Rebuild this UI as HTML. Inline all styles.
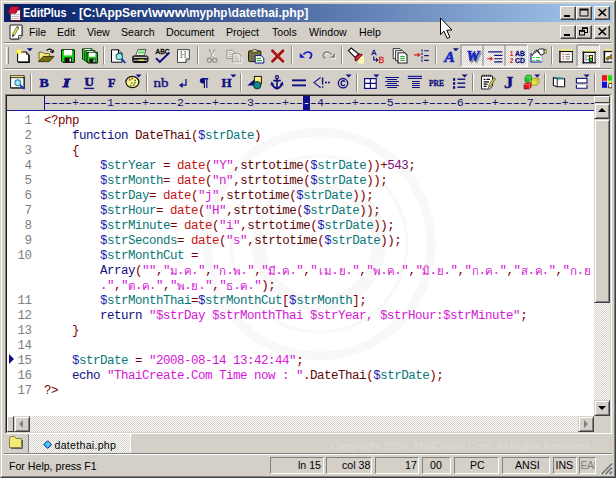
<!DOCTYPE html>
<html><head><meta charset="utf-8"><title>EditPlus - datethai.php</title>
<style>
*{box-sizing:border-box;margin:0;padding:0}
html,body{width:616px;height:478px;overflow:hidden;background:#d4d0c8}
body{position:relative;font-family:"Liberation Sans",sans-serif;font-size:12px;color:#000}
.abs,.a{position:absolute}
i{font-style:normal}
#title{left:4px;top:4px;width:608px;height:18px;background:linear-gradient(90deg,#0a246a 0%,#0a246a 6%,#a6caf0 100%)}
#title .tt{left:0;top:2px;color:#fff;font-weight:bold;font-size:12.2px;line-height:14px;white-space:nowrap}
.btn{position:absolute;width:16px;height:14px;background:#d4d0c8;border:1px solid;border-color:#fff #404040 #404040 #fff;box-shadow:inset -1px -1px 0 #808080}
#menu span{position:absolute;top:26px;font-size:10.6px;line-height:13px;white-space:nowrap}
.hline{position:absolute;left:4px;width:608px;height:2px;border-top:1px solid #808080;border-bottom:1px solid #fff}
.vsep{position:absolute;width:2px;height:20px;border-left:1px solid #808080;border-right:1px solid #fff}
.grip{position:absolute;width:3px;height:22px;border:1px solid;border-color:#fff #808080 #808080 #fff}
/* editor frame */
#frame{left:5px;top:94px;width:607px;height:340px;border:1px solid;border-color:#808080 #fff #fff #808080}
#frame2{left:6px;top:95px;width:604px;height:338px;border:1px solid;border-color:#202020 #d4d0c8 #d4d0c8 #202020}
#ruler{left:7px;top:96px;width:587px;height:15px;background:#d4d0c8;border-bottom:1px solid #1c1c9c;overflow:hidden}
#ruler .rt{position:absolute;left:37px;top:0;font-family:"Liberation Mono",monospace;font-size:11.667px;color:#10106c;white-space:pre;line-height:14px}
#ruler .vl{position:absolute;left:37px;top:0;width:1.2px;height:15px;background:#10108c}
#ruler .h{text-shadow:0.9px 0 0 #10106c,-0.9px 0 0 #10106c}
#editor{left:7px;top:111px;width:587px;height:305px;background:#fff;overflow:hidden}
.ln{position:absolute;left:0;width:24.5px;text-align:right;color:#808080;font-family:"Liberation Mono",monospace;font-size:12.5px;letter-spacing:-0.5px;line-height:15px;height:15px;margin-top:2px}
.cl{position:absolute;left:37px;white-space:pre;font-family:"Liberation Mono","DejaVu Sans Mono",monospace;font-size:12.5px;letter-spacing:-0.5px;line-height:15px;height:15px;color:#5c0808;margin-top:2px}
.k{color:#101080}.v{color:#087878}.d{color:#1818b0}.f{color:#c41414}.s{color:#d418d4}.p{color:#800000}.n{color:#801080}.t{color:#800000}
.th{display:inline-block;overflow:hidden;width:7px;height:15px;vertical-align:top;text-align:center;font-size:11.5px;line-height:15px}
/* scrollbars */
.track{background-color:#fff;background-image:conic-gradient(#d4d0c8 25%,#fff 0 50%,#d4d0c8 0 75%,#fff 0);background-size:2px 2px}
.sbtn{position:absolute;background:#d4d0c8;border:1px solid;border-color:#d4d0c8 #404040 #404040 #d4d0c8;box-shadow:inset 1px 1px 0 #fff,inset -1px -1px 0 #808080}
.arrow{position:absolute;width:0;height:0;border:4px solid transparent}
/* status */
.sf{position:absolute;top:457px;height:17px;border:1px solid;border-color:#808080 #fff #fff #808080;font-size:10.6px;line-height:15px;white-space:nowrap}
.sf i{position:absolute;top:0}

#title .tt i{position:absolute;top:0;transform-origin:0 0;white-space:pre}

</style></head><body>
<!-- outer window border -->
<div class="a" style="left:0;top:0;width:616px;height:478px;border:1px solid;border-color:#d4d0c8 #404040 #404040 #d4d0c8"></div>
<div class="a" style="left:1px;top:1px;width:614px;height:476px;border:1px solid;border-color:#fff #808080 #808080 #fff"></div>
<!-- title bar -->
<div id="title" class="a"><div class="tt a"><i style="left:19px;transform:scaleX(0.892)">EditPlus </i><i style="left:67.5px;transform:scaleX(0.862)">- </i><i style="left:75.0px;transform:scaleX(0.980)">[C:\AppServ</i><i style="left:144.0px;transform:scaleX(1.194)">\www</i><i style="left:182.0px;transform:scaleX(0.957)">\myphp</i><i style="left:223.5px;transform:scaleX(1.007)">\datethai.php]</i></div></div>
<div class="btn" style="left:560px;top:6px"></div>
<div class="btn" style="left:576px;top:6px"></div>
<div class="btn" style="left:594px;top:6px"></div>
<!-- menu -->
<div id="menu">
<span style="left:29px">File</span><span style="left:57px">Edit</span><span style="left:87px">View</span><span style="left:121px">Search</span><span style="left:166px">Document</span><span style="left:226px">Project</span><span style="left:272px">Tools</span><span style="left:309px">Window</span><span style="left:359px">Help</span>
</div>
<div class="btn" style="left:560px;top:25px"></div>
<div class="btn" style="left:576px;top:25px"></div>
<div class="btn" style="left:594px;top:25px"></div>
<div class="hline" style="top:42px"></div>
<div class="hline" style="top:68px"></div>
<svg class="a" style="left:0;top:0;z-index:5" width="616" height="44" viewBox="0 0 616 44">
<!-- app icon -->
<g><path d="M10.6 10.6 H20.2 V20.2 H10.6 Z" fill="#fff"/><path d="M20.6 8 V20.6 H10.4" fill="none" stroke="#700818" stroke-width="1.2"/><path d="M11.6 14.4 H19.6 M11.6 16.4 H19.6 M11.6 18.4 H19.6" stroke="#a8a8a8" stroke-width="0.8"/>
<path d="M10.6 13.4 V20 " stroke="#404040" stroke-width="0.8"/><path d="M16 13.4 L19.6 9.6 V13.4 Z" fill="#fff"/>
<path d="M10.6 6.6 H19.4 L16 13.2 H7.6 Z" fill="#d0103c" stroke="#68081c" stroke-width="0.7"/><path d="M11.4 5.8 H19.6" stroke="#181818" stroke-width="1" stroke-dasharray="0.9 0.9"/></g>
<!-- doc icon -->
<g><path d="M10 25 H22 V35.4 L18.6 39 H10 Z" fill="#fff" stroke="#202020" stroke-width="1"/><path d="M22.6 26 V35.6 L18.8 39.6 H11" fill="none" stroke="#505050" stroke-width="0.9"/><path d="M22 35.4 H18.6 V39" fill="#e8e8e8" stroke="#202020" stroke-width="0.8"/>
<path d="M16.6 27.2 L18.6 28.2 L14.4 35.4 L12.4 34.4 Z" fill="#f0e858" stroke="#505020" stroke-width="0.7"/><path d="M12.4 34.4 L14.4 35.4 L12.2 37.6 Z" fill="#101010"/><path d="M16.9 26.6 L18.9 27.6" stroke="#606060" stroke-width="1.3"/></g>
<!-- title buttons glyphs -->
<g fill="#000"><rect x="564" y="15" width="6" height="2"/><path d="M579.5 8.5 H588.5 V16.5 H579.5 Z M580.5 10.5 V15.5 H587.5 V10.5 Z" fill-rule="evenodd"/>
<path d="M598.6 9 L606 16 M606 9 L598.6 16" stroke="#000" stroke-width="1.6"/>
<rect x="564" y="34" width="6" height="2"/>
<g fill="none" stroke="#000" stroke-width="1"><rect x="582.5" y="28.5" width="5" height="4"/><path d="M582 28 H588" stroke-width="1.6"/><rect x="579.5" y="31" width="5" height="4" fill="#d4d0c8"/><path d="M579 30.8 H585" stroke-width="1.6"/></g>
<path d="M598.6 28 L606 35 M606 28 L598.6 35" stroke="#000" stroke-width="1.6"/></g>
<!-- mouse cursor -->
<path d="M440.5 18 V34.6 L444 31.2 L447.2 38.4 L449.8 37.2 L446.8 30.2 L452 30 Z" fill="#fff" stroke="#000" stroke-width="1" stroke-linejoin="miter"/>
</svg>
<svg class="a" style="left:0;top:0" width="612" height="96" viewBox="0 0 612 96" font-family="'Liberation Serif',serif">
<defs>
<pattern id="chk" width="2" height="2" patternUnits="userSpaceOnUse"><rect width="2" height="2" fill="#fff"/><rect width="1" height="1" fill="#d4d0c8"/><rect x="1" y="1" width="1" height="1" fill="#d4d0c8"/></pattern>
<g id="dd"><path d="M-0.2 0 h6 l-3 3 z" fill="#0c0c88"/></g>
<g id="sep"><rect x="0" y="0.5" width="1" height="18" fill="#8c8884"/><rect x="1" y="0.5" width="1" height="18" fill="#fff"/></g>
<g id="pressed"><rect x="0" y="0" width="22" height="21" fill="url(#chk)"/><path d="M0 21 V0 H22" fill="none" stroke="#808080"/><path d="M0.5 21.5 H22.5 V0" fill="none" stroke="#fff"/></g>
</defs>
<!-- grips -->
<g><rect x="6" y="47" width="1" height="17" fill="#fff"/><rect x="7" y="47" width="1" height="17" fill="#d4d0c8"/><rect x="8" y="47" width="1" height="17" fill="#808080"/></g>
<!-- ===== toolbar 1 ===== -->
<!-- new -->
<g><path d="M17.6 52 H26.4 L28.8 54.4 V62 H17.6 Z" fill="#fff" stroke="#000" stroke-width="1"/><path d="M29.2 55 V62.4 H18.4" fill="none" stroke="#000" stroke-width="1.1"/><path d="M26.4 52 V54.4 H28.8" fill="none" stroke="#000" stroke-width="0.8"/>
<path d="M19 47.8 L20 50.6 L22.8 51.6 L20 52.6 L19 55.4 L18 52.6 L15.2 51.6 L18 50.6 Z" fill="#ffee00"/><path d="M16.6 49.2 L21.4 54 M21.4 49.2 L16.6 54" stroke="#fff060" stroke-width="1"/><circle cx="19" cy="51.6" r="1.9" fill="#ffff40"/><circle cx="19" cy="51.6" r="0.9" fill="#ffffd0"/>
<use href="#dd" x="27" y="48.3"/></g>
<!-- open -->
<g><path d="M39 60.6 V52.2 H42.6 L44 53.6 H49.4 V56.4" fill="#f8ec80" stroke="#585828" stroke-width="0.9"/><path d="M38.6 61.6 L43.2 56.4 H54 L49.2 61.6 Z" fill="#787010" stroke="#282808" stroke-width="0.9"/>
<path d="M46.6 50.6 Q49.2 47.8 52 50.2 L52.6 52 M52.8 52.8 L50.2 51.6 M52.8 52.8 L53.6 50" fill="none" stroke="#000" stroke-width="1.1"/></g>
<!-- save -->
<g><path d="M61.5 49.8 H74.3 V62.3 H62.8 L61.5 61 Z" fill="#18d818" stroke="#000"/><rect x="64" y="50" width="8" height="5.4" fill="#fff"/><rect x="64.5" y="57.5" width="7.5" height="4.8" fill="#101010"/><rect x="69.5" y="58.5" width="1.6" height="3" fill="#e8e8e8"/></g>
<!-- save all -->
<g><path d="M82.5 48.8 H92 V60 H83.5 L82.5 59 Z" fill="#28c828" stroke="#104010"/><rect x="84.5" y="49" width="6" height="3.6" fill="#fff"/>
<path d="M84.8 50.6 H95 V61.6 H85.8 L84.8 60.6 Z" fill="#28c828" stroke="#104010"/><rect x="87" y="51" width="6" height="3.6" fill="#fff"/>
<path d="M87 52.4 H97.4 V63 H88 L87 62 Z" fill="#20d020" stroke="#000"/><rect x="89" y="52.6" width="6.4" height="4.2" fill="#fff"/><rect x="89.4" y="58.6" width="6" height="4.2" fill="#101010"/><rect x="93.4" y="59.4" width="1.3" height="2.6" fill="#e8e8e8"/></g>
<use href="#sep" x="103" y="46"/>
<!-- print preview -->
<g><path d="M111.5 49.8 H118.5 L122 53.3 V62.2 H111.5 Z" fill="#fff" stroke="#000"/><path d="M118.5 49.8 V53.3 H122" fill="#d4d0c8" stroke="#000"/>
<circle cx="119.3" cy="56.6" r="3.2" fill="#9fe8e8" stroke="#107070" stroke-width="1.1"/><path d="M121.8 59.2 L125.4 63" stroke="#1030c0" stroke-width="1.8"/></g>
<!-- print -->
<g><path d="M135.6 55.4 L138.2 49.4 H146 L144.4 55.4 Z" fill="#fff" stroke="#303030" stroke-width="0.8"/><path d="M138.6 51 H145 M138 52.8 H144.4" stroke="#30c830" stroke-width="1.2"/>
<path d="M133.4 55.4 H146.6 Q148.4 55.6 148.4 57.6 V60.6 Q148.4 63 146 63 H134.4 Q132.2 63 132.2 60.6 V57.4 Q132.2 55.6 133.4 55.4 Z" fill="#101010"/>
<path d="M133.6 57.3 H147" stroke="#f4f4f4" stroke-width="1"/><path d="M133.4 60.2 H147.2" stroke="#e8e8e8" stroke-width="0.9"/><rect x="138.8" y="59.5" width="5.4" height="1.4" fill="#f0e430"/><path d="M146 55.8 Q148 56 148 58 V60.4 Q148 62.6 146 62.6" fill="none" stroke="#505050" stroke-width="0.8"/></g>
<!-- spell -->
<g><text x="155.6" y="53.8" font-family="'Liberation Sans',sans-serif" font-size="6.4" fill="#000" stroke="#000" stroke-width="0.3" textLength="14" lengthAdjust="spacingAndGlyphs">ABC</text>
<path d="M156 58.2 L159.8 62 L169.2 52.8" fill="none" stroke="#0c0c80" stroke-width="1.9"/></g>
<!-- H doc -->
<g><path d="M177.5 49.6 H189.3 V59 L186 62.4 H177.5 Z" fill="#fff" stroke="#303030" stroke-width="0.9"/><path d="M189.3 59 H186 V62.4" fill="#d4d0c8" stroke="#303030" stroke-width="0.9"/>
<text x="179.4" y="57.8" font-size="10" fill="#808080">H</text></g>
<use href="#sep" x="197" y="46"/>
<!-- cut (disabled) -->
<g fill="none" stroke="#8c8c88" stroke-width="1.1"><path d="M209.2 49.6 L213.8 58.2 M214.8 49.6 L210.2 58.2"/><circle cx="209.4" cy="60.2" r="2.1"/><circle cx="214.8" cy="60.2" r="2.1"/><path d="M210.2 50.6 L213.8 57.2 M213.8 50.6 L210.2 57.2" stroke="#fff" stroke-width="0.7" transform="translate(0.8 0.8)"/></g>
<!-- copy (disabled) -->
<g fill="#eceae4" stroke="#8c8c88" stroke-width="0.9"><path d="M226.8 50.2 H232 L234.4 52.6 V58.6 H226.8 Z"/><path d="M228.4 52.6 H231.4 M228.4 54.6 H232.8 M228.4 56.6 H232.8" stroke="#a4a29c" stroke-width="0.8"/>
<path d="M232.8 53.4 H238.4 L241 56 V62 H232.8 Z"/><path d="M234.6 56.2 H237.4 M234.6 58.2 H239.2 M234.6 60.2 H239.2" stroke="#a4a29c" stroke-width="0.8"/><path d="M233.4 62.9 H241.9 V56.4" stroke="#fff" fill="none"/></g>
<!-- paste -->
<g><rect x="248.5" y="50.8" width="12.4" height="10.8" rx="1" fill="#747040" stroke="#202010"/><path d="M251.6 52.2 Q251.6 49.4 254.7 49.4 Q257.8 49.4 257.8 52.2 Z" fill="#e8e098" stroke="#303018" stroke-width="0.8"/>
<path d="M255.2 55.6 H261 L263.8 58.2 V63 H255.2 Z" fill="#fff" stroke="#101090"/><path d="M256.8 58.4 H261 M256.8 60.6 H262" stroke="#20b838" stroke-width="1.1"/></g>
<!-- delete X -->
<g><path d="M272.4 50.8 L283 61.4 M283 50.8 L272.4 61.4" stroke="#a80c0c" stroke-width="2.7" stroke-linecap="round"/><path d="M273 51 L282 60" stroke="#d02828" stroke-width="0.9"/></g>
<use href="#sep" x="291" y="46"/>
<!-- undo -->
<g><path d="M303.4 54.6 Q305.4 51.8 308.2 52 Q311.6 52.4 311.6 55.4 Q311.4 57.6 309.4 58.6" fill="none" stroke="#1418d0" stroke-width="1.7"/><path d="M299.8 53 V57.8 H305 Z" fill="#1418d0"/></g>
<!-- redo (disabled) -->
<g><path d="M332.4 55.4 Q330.4 52.6 327.6 52.8 Q324.2 53.2 324.2 56.2 Q324.4 58.4 326.4 59.4" fill="none" stroke="#fff" stroke-width="1.5"/><path d="M336 54 V58.8 H330.8 Z" fill="#fff"/>
<path d="M331.6 54.6 Q329.6 51.8 326.8 52 Q323.4 52.4 323.4 55.4 Q323.6 57.6 325.6 58.6" fill="none" stroke="#848280" stroke-width="1.6"/><path d="M335.2 53 V57.8 H330 Z" fill="#848280"/></g>
<use href="#sep" x="341" y="46"/>
<!-- flashlight -->
<g><path d="M358 56.6 H364 V63.8 H358.6 Z" fill="#fffcb0"/><path d="M359.6 58.4 H363.6 M359.6 60.4 H363.6 M359.6 62.4 H363.6" stroke="#f0e890" stroke-width="0.8" stroke-dasharray="1 1"/>
<path d="M348.4 50.6 L351.2 48 L358.6 54 L355.4 57.6 Z" fill="#fff" stroke="#101010" stroke-width="1.2"/>
<path d="M355.2 57.4 L358.6 53.8 L362.2 54.6 L361 56 L356.4 61 L355 60.4 Z" fill="#c81020" stroke="#50080c" stroke-width="0.9"/><path d="M356.6 58.6 L360.6 55.2" stroke="#ff5060" stroke-width="1"/></g>
<!-- replace A->B -->
<g font-family="'Liberation Sans',sans-serif"><text x="371.2" y="55.4" font-size="7.8" fill="#101080" stroke="#101080" stroke-width="0.3">A</text><text x="378.6" y="62.6" font-size="8.6" fill="#e02020" stroke="#e02020" stroke-width="0.3">B</text>
<path d="M373.8 56.6 V60 H377" fill="none" stroke="#101080" stroke-width="1.2"/><path d="M376 57.8 L378.6 60 L376 62.2 Z" fill="#101080"/></g>
<!-- find in files -->
<g fill="#fff" stroke="#202020" stroke-width="0.9"><path d="M393.2 48.6 H400 L402 50.6 V58.6 H393.2 Z"/><path d="M395.6 50.6 H402.4 L404.4 52.6 V60.8 H395.6 Z"/><path d="M398 52.8 H404.8 L407 55 V63 H398 Z" stroke-width="1.1"/>
<path d="M400.2 56.4 H404.8 M400.2 58.4 H404.8 M400.2 60.4 H404.8" stroke="#189830" stroke-width="1"/></g>
<!-- goto line -->
<g><path d="M414 54.9 H418.6" stroke="#e02020" stroke-width="1.3"/><path d="M417.6 52.5 L420.6 54.9 L417.6 57.3 Z" fill="#e02020"/>
<path d="M422 49.4 V63" stroke="#101080" stroke-width="1.1" stroke-dasharray="2.2 1.2"/><path d="M424.2 50.8 H428.8 M424.2 55.6 H428.8 M424.2 60.4 H428.8" stroke="#101080" stroke-width="1.1"/></g>
<use href="#sep" x="435" y="46"/>
<!-- A font -->
<g><text x="444.2" y="61.6" font-size="14.2" font-weight="bold" font-style="italic" fill="#1424c4" stroke="#1424c4" stroke-width="0.5" textLength="10.6" lengthAdjust="spacingAndGlyphs">A</text><use href="#dd" x="453" y="48.3"/></g>
<!-- W pressed -->
<use href="#pressed" x="461" y="45"/>
<g font-weight="bold" font-style="italic" font-size="14"><text x="468" y="62.6" fill="#908c88" stroke="#908c88" stroke-width="0.5" textLength="13" lengthAdjust="spacingAndGlyphs">W</text><text x="466.6" y="61.4" fill="#1424c4" stroke="#1424c4" stroke-width="0.6" textLength="13" lengthAdjust="spacingAndGlyphs">W</text></g>
<!-- indent pressed -->
<use href="#pressed" x="483" y="45"/>
<g><path d="M488.2 51.9 H502.4 M494.2 55.3 H502.4 M494.2 58.7 H502.4 M494.2 61.9 H502.4" stroke="#101080" stroke-width="1.15"/><path d="M487.4 58.7 H491" stroke="#e02020" stroke-width="1.2"/><path d="M490.4 56.5 L493.2 58.7 L490.4 60.9 Z" fill="#e02020"/></g>
<!-- line numbers pressed -->
<use href="#pressed" x="505" y="45"/>
<g font-family="'Liberation Sans',sans-serif" font-weight="bold" font-size="6.6" stroke-width="0.3"><text x="509.8" y="55.6" fill="#d02020">1</text><text x="509.8" y="63" fill="#d02020">2</text><text x="515" y="55.6" fill="#101080" stroke="#101080" textLength="9.8" lengthAdjust="spacingAndGlyphs">AB</text><text x="515" y="63" fill="#101080" stroke="#101080" textLength="9.8" lengthAdjust="spacingAndGlyphs">CD</text></g>
<!-- properties -->
<g><rect x="531" y="53" width="11" height="9" fill="#fff"/><path d="M531 53 V62 H542.2" fill="none" stroke="#1020a0" stroke-width="1.1"/><path d="M542 55 V62" stroke="#8090d0" stroke-width="0.7"/>
<path d="M532.6 57.5 H534.6 M535.8 57.5 H540.2 M532.6 60.4 H534.6 M535.8 60.4 H540.2" stroke="#28c840" stroke-width="1.2"/>
<path d="M531.8 55.4 L536.8 50 L541.2 54.8" fill="none" stroke="#181818" stroke-width="1.7" stroke-dasharray="1.3 0.7"/>
<path d="M537.8 50.2 L539.4 49 H543.8 L544.2 53.6 L540.8 55.2 Z" fill="#fff" stroke="#101010" stroke-width="0.9"/><rect x="544.3" y="49.2" width="1.8" height="4.4" fill="#f4ec70" stroke="#202010" stroke-width="0.5"/></g>
<use href="#sep" x="551" y="46"/>
<!-- list window -->
<g><rect x="559.2" y="49.4" width="13.6" height="13" fill="#fff"/><rect x="559.2" y="49.4" width="13.6" height="1.4" fill="#f4ec60"/><path d="M559.2 51.5 H572.8" stroke="#101010" stroke-width="1.2"/><path d="M559.9 50.8 V62.4" stroke="#101010" stroke-width="1.4"/><path d="M559.2 61.9 H572.8" stroke="#101010" stroke-width="1.3"/><path d="M572.4 50.8 V62.4" stroke="#101010" stroke-width="0.9"/>
<path d="M562.6 54.4 H563.9 M562.6 56.7 H563.9 M562.6 59 H563.9" stroke="#d02020" stroke-width="1.1"/><path d="M565.4 54.4 H570 M565.4 56.7 H570 M565.4 59 H570" stroke="#808080" stroke-width="1"/></g>
<!-- doc selector pressed -->
<use href="#pressed" x="577" y="45"/>
<g><rect x="582.6" y="50.2" width="13" height="13.2" fill="#fff"/><rect x="582.6" y="50.2" width="13" height="1.4" fill="#f4ec60"/><path d="M582.6 52.3 H595.6" stroke="#101010" stroke-width="1.3"/><path d="M583.4 51.6 V63.4" stroke="#101010" stroke-width="1.6"/><path d="M582.6 62.8 H595.6" stroke="#101010" stroke-width="1.3"/><path d="M595.1 51.6 V63.4" stroke="#101010" stroke-width="1"/>
<path d="M586 54.2 V61 M586 59.5 H589 M586 56 H589" fill="none" stroke="#909090" stroke-width="1.1"/><rect x="588.9" y="55" width="4.1" height="6.9" fill="#181818"/><circle cx="591" cy="57" r="1.25" fill="#f0f040"/><circle cx="591" cy="60" r="1.25" fill="#30e050"/></g>
<!-- pin window (clipped) -->
<g><rect x="603.6" y="49.4" width="13" height="13.2" fill="#fff"/><rect x="603.6" y="49.4" width="13" height="1.4" fill="#f4ec60"/><path d="M603.6 51.5 H616" stroke="#101010" stroke-width="1.3"/><path d="M604.4 50.8 V62.6" stroke="#101010" stroke-width="1.6"/><path d="M603.6 62.1 H616" stroke="#101010" stroke-width="1.3"/>
<path d="M605.8 58.8 L607.6 56.6 L609.6 56.6 L611.2 54.2 L613 54 V57.4 L611 58.6 L609.4 58.6 L607.6 60.4 Z" fill="#8c8420" stroke="#38340c" stroke-width="0.6"/><circle cx="611.4" cy="58.6" r="0.8" fill="#c02020"/></g>
<!-- ===== toolbar 2 ===== -->
<!-- browser -->
<g><rect x="10.6" y="75.8" width="13.4" height="12" fill="#fff" stroke="#181818" stroke-width="1"/><rect x="11.1" y="75.9" width="12.4" height="1.3" fill="#f0e050"/><path d="M10.6 77.7 H24" stroke="#181818" stroke-width="0.9"/><path d="M24.4 77 V88.2 H11" fill="none" stroke="#181818" stroke-width="0.8"/>
<circle cx="17.8" cy="82.8" r="2.9" fill="#a8e8f0" stroke="#2890c8" stroke-width="1.1"/><path d="M20 85 L24.6 89.2" stroke="#1838d0" stroke-width="1.8"/></g>
<use href="#sep" x="30" y="73"/>
<g font-weight="bold" fill="#101080" stroke="#101080" stroke-width="0.55">
<text x="39.6" y="86.8" font-size="12.4" textLength="9.2" lengthAdjust="spacingAndGlyphs">B</text>
<text x="62.8" y="86.8" font-size="12.4" font-style="italic" textLength="7" lengthAdjust="spacingAndGlyphs" stroke-width="0.9">I</text>
<text x="84.4" y="86.4" font-size="11.8" textLength="9.4" lengthAdjust="spacingAndGlyphs">U</text><rect x="84.4" y="88" width="9.4" height="0.8"/>
<text x="108" y="86.8" font-size="12.4" textLength="7.4" lengthAdjust="spacingAndGlyphs">F</text>
</g>
<!-- palette -->
<g><ellipse cx="132.4" cy="82" rx="6.5" ry="5.7" fill="#fcf88c" stroke="#141410" stroke-width="1.2"/><circle cx="129.8" cy="79.8" r="0.85" fill="#901818"/><circle cx="132.2" cy="78.6" r="0.85" fill="#901818"/><circle cx="135.2" cy="80.4" r="0.85" fill="#187848"/><circle cx="134.8" cy="82.8" r="0.85" fill="#187848"/><circle cx="133.8" cy="85" r="0.85" fill="#b02020"/><circle cx="130.8" cy="85.4" r="0.85" fill="#188040"/><circle cx="132" cy="83" r="0.7" fill="#2030a0"/>
<use href="#dd" x="135.8" y="74.4"/></g>
<use href="#sep" x="146" y="73"/>
<text x="153.4" y="87" font-size="12.6" fill="#101080" stroke="#101080" stroke-width="0.35" textLength="15" lengthAdjust="spacingAndGlyphs">nb</text>
<!-- br arrow -->
<g><path d="M186 79 V85.2 H181.6" fill="none" stroke="#101080" stroke-width="1.3"/><path d="M182.6 82.4 L179 85.2 L182.6 88 Z" fill="#101080"/></g>
<!-- pilcrow -->
<g fill="#101080"><path d="M203 78 H208.2 V79.4 H207.4 V88 H206.2 V79.4 H205 V88 H203.8 V83.6 Q199.8 83.6 199.8 80.8 Q199.8 78 203 78 Z"/></g>
<!-- H -->
<g><text x="221.6" y="87.2" font-size="13" font-weight="bold" fill="#101080" stroke="#101080" stroke-width="0.4">H</text><use href="#dd" x="230.6" y="74.4"/></g>
<use href="#sep" x="240" y="73"/>
<!-- image -->
<g><rect x="254.4" y="76.4" width="7" height="7.4" fill="#fcf478" stroke="#181810" stroke-width="1"/><path d="M247.2 85.6 L254.2 79.6 V85.6 Z" fill="#101080"/><circle cx="257.2" cy="85.2" r="3.7" fill="#108888" stroke="#082828" stroke-width="0.9"/></g>
<!-- anchor -->
<g fill="none" stroke="#101080" stroke-width="1.6"><circle cx="277" cy="77.2" r="1.5" stroke-width="1.3"/><path d="M277 78.8 V88 M273.2 80.6 H280.8"/><path d="M271.8 83.6 Q273.4 87.6 277 88.6 Q280.6 87.6 282.2 83.6" stroke-width="1.9"/><path d="M270.4 85.4 L271.4 81.6 L274.2 84.2 Z M283.6 85.4 L282.6 81.6 L279.8 84.2 Z" fill="#101080" stroke="none"/><path d="M275.6 87.6 L277 89.6 L278.4 87.6 Z" fill="#101080" stroke="none"/></g>
<!-- hr -->
<g fill="#101080"><rect x="292" y="79.4" width="14" height="1.9"/><rect x="292" y="84.4" width="14" height="1.9"/></g>
<!-- comment -->
<g fill="none" stroke="#101080" stroke-width="1.1"><path d="M320.6 77.4 L314 82.6 L320.6 87.8"/><path d="M322.6 77.4 V84.4 M322.6 86.2 V87.8" stroke-width="1.4"/><path d="M325 82.6 H327 M328 82.6 H330" stroke-width="1.5"/></g>
<!-- copyright -->
<g><circle cx="343" cy="83.2" r="4.7" fill="none" stroke="#101080" stroke-width="1.35"/><path d="M345 81.6 Q343.2 80 341.6 81.4 Q340.4 83.2 341.6 85 Q343.2 86.4 345 84.8" fill="none" stroke="#101080" stroke-width="1.35"/><use href="#dd" x="345.8" y="74.4"/></g>
<use href="#sep" x="356" y="73"/>
<!-- table -->
<g><rect x="364.6" y="78.6" width="11.6" height="9.8" fill="#fff" stroke="#101080" stroke-width="1.2"/><path d="M370.4 78.6 V88.4 M364.6 83.4 H376.2" stroke="#101080" stroke-width="1.2"/><use href="#dd" x="373.6" y="74.4"/></g>
<!-- center -->
<g stroke="#101080" stroke-width="1.15"><path d="M385.2 77.5 H399 M387.2 79.5 H397 M385.2 81.5 H399 M387.2 83.5 H397 M385.2 85.5 H399 M387.2 87.5 H397"/></g>
<!-- right-ish -->
<g stroke="#101080"><path d="M407.8 76.4 H422 M407.8 78.5 H422" stroke-width="1.15"/><path d="M407.8 77.4 H422" stroke="#b0b0f0" stroke-width="1"/><path d="M412 81.5 H419.8 M412 83.5 H419.8 M412 85.5 H419.8 M412 87.5 H419.8" stroke-width="1.15"/></g>
<text x="429" y="86" font-size="8.8" font-weight="bold" fill="#101080" stroke="#101080" stroke-width="0.35" textLength="15" lengthAdjust="spacingAndGlyphs">PRE</text>
<!-- list -->
<g fill="#101080"><rect x="453" y="78.2" width="2.2" height="2.6"/><rect x="453" y="82.2" width="2.2" height="2.6"/><rect x="453" y="86.2" width="2.2" height="2.6"/><rect x="457.4" y="78.5" width="7.8" height="1.4"/><rect x="457.4" y="82.5" width="7.8" height="1.4"/><rect x="457.4" y="86.5" width="7.8" height="1.4"/><use href="#dd" x="461.8" y="74.4"/></g>
<use href="#sep" x="472" y="73"/>
<!-- notepad -->
<g><path d="M481.5 76 H492.5 V86 L489.5 89 H481.5 Z" fill="#fff" stroke="#202020"/><path d="M482.6 74.6 V76.6 M484.6 74.6 V76.6 M486.6 74.6 V76.6 M488.6 74.6 V76.6 M490.6 74.6 V76.6" stroke="#202020" stroke-width="0.9"/>
<path d="M483.6 79.4 H485.4 M486.4 79.4 H490 M483.6 81.8 H489 M483.6 84.2 H487.6 M483.6 86.4 H486.6" stroke="#080808" stroke-width="1.25"/><path d="M488.4 87.6 L489.2 84.4 L493.8 77.6 L495.4 78.8 L491 85.8 Z" fill="#e8d840" stroke="#303010" stroke-width="0.7"/></g>
<!-- J -->
<text x="504" y="87.8" font-size="16.8" font-weight="bold" fill="#101080" stroke="#101080" stroke-width="0.4" textLength="9.4" lengthAdjust="spacingAndGlyphs">J</text>
<!-- cubes -->
<g stroke-width="0.6"><path d="M531.6 80 L533.4 78.2 H538.8 V83.4 L537 85.2 H531.6 Z" fill="#ece444" stroke="#707010"/><path d="M531.6 80 H537 V85.2 M537 80 L538.8 78.2" fill="none" stroke="#a8a428"/>
<path d="M525 76.8 L526.8 75.2 H531.4 V79.8 L529.8 81.4 H525 Z" fill="#20c820" stroke="#106010"/><path d="M525 76.8 H529.8 V81.4 M529.8 76.8 L531.4 75.2" fill="none" stroke="#90f090"/>
<path d="M524 84.4 L525.8 82.8 H531 V87.4 L529.4 89 H524 Z" fill="#e01818" stroke="#601010"/><path d="M524 84.4 H529.4 V89 M529.4 84.4 L531 82.8" fill="none" stroke="#ff9090"/>
<use href="#dd" x="534.4" y="74.4"/></g>
<use href="#sep" x="544" y="73"/>
<!-- 3d box -->
<g><path d="M553.4 77.6 L557.2 78.6 H564.6 V86.8 H557.2 L553.4 85.4 Z" fill="#fff" stroke="#101010" stroke-width="1.1"/><path d="M553.8 77.4 H560.6 L564.4 78.6 H557.2 Z" fill="#60d0d8" stroke="#208088" stroke-width="0.6"/><path d="M557.2 78.6 V86.8" stroke="#101010" stroke-width="0.9"/><path d="M565.4 85 V87.4 L563 87.6 Z" fill="#808080"/></g>
<!-- form icon -->
<g><rect x="576.4" y="78.4" width="10.6" height="4.6" fill="#fff" stroke="#101080" stroke-width="1.1"/><path d="M576.4 85 V88.2 H587 V85" fill="#fff" stroke="#101080" stroke-width="1.1"/><use href="#dd" x="583.8" y="74.6"/></g>
<use href="#sep" x="594" y="73"/>
<!-- colour squares -->
<g><rect x="602" y="75.2" width="5.6" height="6" fill="#f01010"/><rect x="607.6" y="75.2" width="5" height="6" fill="#18e018"/><rect x="602" y="81.2" width="5.6" height="6.6" fill="#1010e0"/><rect x="607.6" y="81.2" width="5" height="6.6" fill="#f0e818"/><path d="M602.6 81.2 H612 M607.6 75.4 V87.6" stroke="#fff" stroke-width="0.7"/><path d="M608.6 84.6 Q608.6 83.4 609.8 83.4 H612 V87.8 H608.6 Z" fill="#fff" stroke="#101010" stroke-width="0.8"/></g>
</svg>

<!-- editor frame -->
<div id="frame" class="a"></div><div id="frame2" class="a"></div>
<div id="ruler" class="a"><div class="vl"></div><div class="rt"><i class="h">----</i>+<i class="h">----</i>1<i class="h">----</i>+<i class="h">----</i>2<i class="h">----</i>+<i class="h">----</i>3<i class="h">----</i>+<i class="h">----</i>4<i class="h">----</i>+<i class="h">----</i>5<i class="h">----</i>+<i class="h">----</i>6<i class="h">----</i>+<i class="h">----</i>7<i class="h">----</i>+<i class="h">----</i>8</div><div class="rt" style="left:296px;width:7px;height:15px;background:#10108c;color:#fff;overflow:hidden">-</div></div>
<div id="editor" class="a">
<svg class="a" style="left:0;top:0" width="587" height="305" viewBox="0 0 587 305"><g fill="none" stroke="#f8f8f8"><circle cx="312" cy="133" r="112" stroke-width="9"/><circle cx="312" cy="133" r="88" stroke-width="3"/><circle cx="312" cy="133" r="60" stroke-width="14"/></g></svg>
<div class="a" style="left:2px;top:243px;width:0;height:0;border:5px solid transparent;border-left:5.4px solid #10107c;border-right:0"></div>
<div class="ln" style="top:1px">1</div>
<div class="cl" style="top:1px"><span class="t">&lt;?php</span></div>
<div class="ln" style="top:16px">2</div>
<div class="cl" style="top:16px">    <span class="k">function</span> DateThai<span class="p">(</span><span class="d">$</span><span class="v">strDate</span><span class="p">)</span></div>
<div class="ln" style="top:31px">3</div>
<div class="cl" style="top:31px">    <span class="p">{</span></div>
<div class="ln" style="top:46px">4</div>
<div class="cl" style="top:46px">        <span class="d">$</span><span class="v">strYear</span> <span class="p">=</span> <span class="f">date</span><span class="p">(</span><span class="s">"Y"</span><span class="p">,</span>strtotime<span class="p">(</span><span class="d">$</span><span class="v">strDate</span><span class="p">)</span><span class="p">)</span><span class="p">+</span><span class="n">543</span><span class="p">;</span></div>
<div class="ln" style="top:61px">5</div>
<div class="cl" style="top:61px">        <span class="d">$</span><span class="v">strMonth</span><span class="p">=</span> <span class="f">date</span><span class="p">(</span><span class="s">"n"</span><span class="p">,</span>strtotime<span class="p">(</span><span class="d">$</span><span class="v">strDate</span><span class="p">)</span><span class="p">)</span><span class="p">;</span></div>
<div class="ln" style="top:76px">6</div>
<div class="cl" style="top:76px">        <span class="d">$</span><span class="v">strDay</span><span class="p">=</span> <span class="f">date</span><span class="p">(</span><span class="s">"j"</span><span class="p">,</span>strtotime<span class="p">(</span><span class="d">$</span><span class="v">strDate</span><span class="p">)</span><span class="p">)</span><span class="p">;</span></div>
<div class="ln" style="top:91px">7</div>
<div class="cl" style="top:91px">        <span class="d">$</span><span class="v">strHour</span><span class="p">=</span> <span class="f">date</span><span class="p">(</span><span class="s">"H"</span><span class="p">,</span>strtotime<span class="p">(</span><span class="d">$</span><span class="v">strDate</span><span class="p">)</span><span class="p">)</span><span class="p">;</span></div>
<div class="ln" style="top:106px">8</div>
<div class="cl" style="top:106px">        <span class="d">$</span><span class="v">strMinute</span><span class="p">=</span> <span class="f">date</span><span class="p">(</span><span class="s">"i"</span><span class="p">,</span>strtotime<span class="p">(</span><span class="d">$</span><span class="v">strDate</span><span class="p">)</span><span class="p">)</span><span class="p">;</span></div>
<div class="ln" style="top:121px">9</div>
<div class="cl" style="top:121px">        <span class="d">$</span><span class="v">strSeconds</span><span class="p">=</span> <span class="f">date</span><span class="p">(</span><span class="s">"s"</span><span class="p">,</span>strtotime<span class="p">(</span><span class="d">$</span><span class="v">strDate</span><span class="p">)</span><span class="p">)</span><span class="p">;</span></div>
<div class="ln" style="top:136px">10</div>
<div class="cl" style="top:136px">        <span class="d">$</span><span class="v">strMonthCut</span> <span class="p">=</span> </div>
<div class="cl" style="top:151px">        <span class="k">Array</span><span class="p">(</span><span class="s">""</span><span class="p">,</span><span class="s">"<i class="th">ม</i>.<i class="th">ค</i>."</span><span class="p">,</span><span class="s">"<i class="th">ก</i>.<i class="th">พ</i>."</span><span class="p">,</span><span class="s">"<i class="th">มี</i>.<i class="th">ค</i>."</span><span class="p">,</span><span class="s">"<i class="th">เ</i><i class="th">ม</i>.<i class="th">ย</i>."</span><span class="p">,</span><span class="s">"<i class="th">พ</i>.<i class="th">ค</i>."</span><span class="p">,</span><span class="s">"<i class="th">มิ</i>.<i class="th">ย</i>."</span><span class="p">,</span><span class="s">"<i class="th">ก</i>.<i class="th">ค</i>."</span><span class="p">,</span><span class="s">"<i class="th">ส</i>.<i class="th">ค</i>."</span><span class="p">,</span><span class="s">"<i class="th">ก</i>.<i class="th">ย</i></span></div>
<div class="cl" style="top:166px">        <span class="s">."</span><span class="p">,</span><span class="s">"<i class="th">ต</i>.<i class="th">ค</i>."</span><span class="p">,</span><span class="s">"<i class="th">พ</i>.<i class="th">ย</i>."</span><span class="p">,</span><span class="s">"<i class="th">ธ</i>.<i class="th">ค</i>."</span><span class="p">)</span><span class="p">;</span></div>
<div class="ln" style="top:181px">11</div>
<div class="cl" style="top:181px">        <span class="d">$</span><span class="v">strMonthThai</span><span class="p">=</span><span class="d">$</span><span class="v">strMonthCut</span><span class="p">[</span><span class="d">$</span><span class="v">strMonth</span><span class="p">]</span><span class="p">;</span></div>
<div class="ln" style="top:196px">12</div>
<div class="cl" style="top:196px">        <span class="k">return</span> <span class="s">"$strDay $strMonthThai $strYear, $strHour:$strMinute"</span><span class="p">;</span></div>
<div class="ln" style="top:211px">13</div>
<div class="cl" style="top:211px">    <span class="p">}</span></div>
<div class="ln" style="top:226px">14</div>
<div class="ln" style="top:241px">15</div>
<div class="cl" style="top:241px">    <span class="d">$</span><span class="v">strDate</span> <span class="p">=</span> <span class="s">"2008-08-14 13:42:44"</span><span class="p">;</span></div>
<div class="ln" style="top:256px">16</div>
<div class="cl" style="top:256px">    <span class="k">echo</span> <span class="s">"ThaiCreate.Com Time now : "</span><span class="p">.</span>DateThai<span class="p">(</span><span class="d">$</span><span class="v">strDate</span><span class="p">)</span><span class="p">;</span></div>
<div class="ln" style="top:271px">17</div>
<div class="cl" style="top:271px"><span class="t">?&gt;</span></div>
</div>
<!-- vertical scrollbar -->
<div class="a track" style="left:594px;top:96px;width:16px;height:320px"></div>
<div class="a" style="left:594px;top:96px;width:16px;height:7px;background:#d4d0c8;border:1px solid;border-color:#fff #404040 #404040 #fff"></div>
<div class="sbtn" style="left:594px;top:103px;width:16px;height:16px"><div class="arrow" style="left:3px;top:0px;border-bottom-color:#000"></div></div>
<div class="sbtn" style="left:594px;top:119px;width:16px;height:184px"></div>
<div class="sbtn" style="left:594px;top:400px;width:16px;height:16px"><div class="arrow" style="left:3px;top:5px;border-top-color:#000"></div></div>
<!-- horizontal scrollbar -->
<div class="a track" style="left:7px;top:416px;width:587px;height:16px"></div>
<div class="a" style="left:7px;top:416px;width:7px;height:16px;background:#d4d0c8;border:1px solid;border-color:#fff #404040 #404040 #fff"></div>
<div class="sbtn" style="left:14px;top:416px;width:16px;height:16px"><div class="arrow" style="left:0px;top:3px;border-right-color:#808080"></div></div>
<div class="sbtn" style="left:578px;top:416px;width:16px;height:16px"><div class="arrow" style="left:5px;top:3px;border-left-color:#808080"></div></div>
<div class="a" style="left:594px;top:416px;width:16px;height:16px;background:#d4d0c8"></div>
<!-- doc tab bar -->
<div class="a track" style="left:28px;top:434px;width:103px;height:19px;border-left:1px solid #808080;border-right:1px solid #fff"></div>
<div class="a" id="tabt" style="left:54.5px;top:439px;letter-spacing:0.28px;font-size:10.6px;line-height:13px;white-space:nowrap">datethai.php</div>
<svg class="a" style="left:42px;top:439px" width="12" height="12" viewBox="0 0 12 12"><path d="M5.6 1.8 L9.4 5.6 L5.6 9.4 L1.8 5.6 Z" fill="#38c8f8" stroke="#102090" stroke-width="1"/><path d="M5.6 3.6 L7.6 5.6" stroke="#c0f0ff" stroke-width="0.8"/></svg>
<svg class="a" style="left:8px;top:435px" width="16" height="14" viewBox="0 0 16 14"><path d="M1.5 3.5 Q1.5 1.5 3.5 1.5 L6.5 1.5 L8 3.5 L13.5 3.5 L13.5 12.5 L1.5 12.5 Z" fill="#f4ec70" stroke="#808060" stroke-width="1"/><path d="M14.5 5 V13.5 H3" stroke="#606060" fill="none"/></svg>
<div class="a" style="left:331px;top:439px;font-size:10.6px;line-height:14px;color:#dedbd4;white-space:nowrap" id="cpr">CopyRight 2009, ThaiCreate.Com. All Rights Reserved.</div>
<div class="hline" style="top:453px;left:4px;width:608px"></div>
<!-- status bar -->
<div class="a" id="stt" style="left:9px;top:460px;font-size:10.6px;line-height:13px;white-space:nowrap">For Help, press F1</div>
<div class="sf" style="left:270px;width:54px"><i style="left:27px">ln 15</i></div>
<div class="sf" style="left:326px;width:46px"><i style="left:15px">col 38</i></div>
<div class="sf" style="left:375px;width:44px"><i style="left:29px">17</i></div>
<div class="sf" style="left:422px;width:29px"><i style="left:7px">00</i></div>
<div class="sf" style="left:454px;width:45px"><i style="left:15px">PC</i></div>
<div class="sf" style="left:502px;width:48px"><i style="left:12px">ANSI</i></div>
<div class="sf" style="left:553px;width:24px"><i style="left:1.5px">INS</i></div>
<div class="sf" style="left:579px;width:17px;color:#808080;overflow:hidden"><i style="left:0.5px;letter-spacing:-0.6px">EAI</i></div>
<svg class="a" style="left:599px;top:461px" width="14" height="14" viewBox="0 0 14 14"><g stroke-width="1"><path d="M13 1 L1 13 M13 5 L5 13 M13 9 L9 13" stroke="#fff"/><path d="M13 2.5 L2.5 13 M13 6.5 L6.5 13 M13 10.5 L10.5 13" stroke="#808080" stroke-width="2"/></g></svg>

</body></html>
